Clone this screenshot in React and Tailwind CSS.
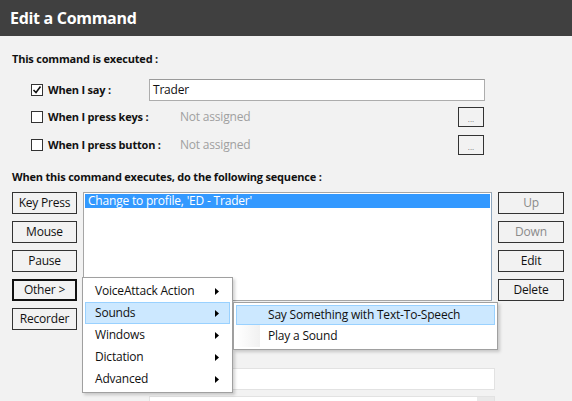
import { useState } from 'react';

const ui = { fontFamily: '"Open Sans", "Noto Sans", sans-serif' };

function Arrow() {
  return (
    <svg width="4" height="7" viewBox="0 0 4 7" className="shrink-0">
      <polygon points="0,0 4,3.5 0,7" fill="#000" />
    </svg>
  );
}

function CheckBox({ checked }) {
  return (
    <span className="flex h-[12px] w-[12px] shrink-0 items-center justify-center border border-[#333] bg-white">
      {checked && (
        <svg width="10" height="10" viewBox="0 0 10 10">
          <polyline points="1.5,5 4,7.5 8.5,1.5" fill="none" stroke="#111" strokeWidth="1.6" />
        </svg>
      )}
    </span>
  );
}

function SideButton({ children, disabled, isDefault }) {
  return (
    <button
      className={`h-[22px] w-full bg-[#f2f2f2] text-[12px] leading-none tracking-[-0.2px] ${
        isDefault ? 'border-2 border-[#111]' : 'border border-[#333]'
      } ${disabled ? 'text-[#8a8a8a]' : 'text-[#111]'}`}
    >
      {children}
    </button>
  );
}

function TriggerRow({ label, button }) {
  return (
    <div className="flex h-[20px] items-center pl-[19px]">
      <CheckBox />
      <span className="ml-[5px] w-[132px] whitespace-nowrap text-[11px] font-bold tracking-[-0.2px] text-[#111]">
        {label}
      </span>
      <span className="whitespace-nowrap text-[12px] tracking-[-0.2px] text-[#a0a0a0]">Not assigned</span>
      {button && (
        <button className="ml-auto mr-[76px] flex h-[20px] w-[26px] items-end justify-center border border-[#333] bg-[#f2f2f2] pb-[3px] text-[8px] leading-none text-[#777]">
          ...
        </button>
      )}
    </div>
  );
}

export default function App() {
  const [selected] = useState(0);
  const actions = [
    { label: 'VoiceAttack Action' },
    { label: 'Sounds', open: true },
    { label: 'Windows' },
    { label: 'Dictation' },
    { label: 'Advanced' },
  ];

  return (
    <div className="relative h-[401px] w-[572px] overflow-hidden bg-[#f2f2f2]" style={ui}>
      <div className="flex h-[36px] items-center bg-[#404040] px-[10px]">
        <span className="text-[16px] font-bold tracking-[-0.3px] text-white">Edit a Command</span>
      </div>

      <div className="px-[12px]">
        <div className="mt-[14px] h-[18px] whitespace-nowrap text-[11px] font-bold leading-[18px] tracking-[-0.2px] text-[#111]">
          This command is executed :
        </div>

        <div className="mt-[11px] flex h-[22px] items-center pl-[19px]">
          <CheckBox checked />
          <span className="ml-[5px] w-[101px] text-[11px] font-bold tracking-[-0.2px] text-[#111]">When I say :</span>
          <div className="flex h-[22px] w-[336px] items-center border border-[#adadad] border-t-[#9a9a9a] bg-white px-[3px] text-[12px] tracking-[-0.2px] text-[#111]">
            Trader
          </div>
        </div>

        <div className="mt-[6px]">
          <TriggerRow label="When I press keys :" button />
        </div>
        <div className="mt-[8px]">
          <TriggerRow label="When I press button :" button />
        </div>

        <div className="mt-[13px] h-[18px] whitespace-nowrap text-[11px] font-bold leading-[18px] tracking-[-0.2px] text-[#111]">
          When this command executes, do the following sequence :
        </div>

        <div className="mt-[6px] flex items-start gap-[6px]">
          <div className="flex w-[65px] shrink-0 flex-col gap-[7px]">
            <SideButton>Key Press</SideButton>
            <SideButton>Mouse</SideButton>
            <SideButton>Pause</SideButton>
            <SideButton isDefault>Other &gt;</SideButton>
            <SideButton>Recorder</SideButton>
          </div>

          <div className="h-[109px] w-[409px] shrink-0 border border-[#a6a6a6] border-r-[#8fa6bd] bg-white p-px">
            {["Change to profile, 'ED - Trader'"].map((row, i) => (
              <div
                key={row}
                className={`h-[14px] px-[3px] text-[12px] leading-[14px] tracking-[-0.2px] ${
                  i === selected ? 'bg-[#3399ff] text-white' : 'text-[#111]'
                }`}
              >
                {row}
              </div>
            ))}
          </div>

          <div className="flex w-[66px] shrink-0 flex-col gap-[7px]">
            <SideButton disabled>Up</SideButton>
            <SideButton disabled>Down</SideButton>
            <SideButton>Edit</SideButton>
            <SideButton>Delete</SideButton>
          </div>
        </div>

        <div className="ml-[137px] mt-[38px] h-[22px] w-[346px] border border-[#e2e2e2] bg-white" />
        <div className="ml-[137px] mt-[6px] flex h-[22px] w-[346px] border border-[#e2e2e2] bg-white">
          <div className="ml-auto w-[17px] bg-[#e9e9e9]" />
        </div>
      </div>

      {/* "Other >" action menu */}
      <div className="absolute left-[82px] top-[277px] w-[151px] border border-[#a0a0a0] bg-white p-[2px] shadow-[2px_2px_3px_rgba(0,0,0,0.18)]">
        {actions.map((a) => (
          <div
            key={a.label}
            className={`flex h-[22px] items-center pl-[9px] pr-[10px] text-[12px] tracking-[-0.2px] text-[#111] ${
              a.open ? 'border border-[#99d1ff] bg-[#cce8ff]' : 'border border-transparent'
            }`}
          >
            <span className="flex-1">{a.label}</span>
            <Arrow />
          </div>
        ))}
      </div>

      {/* Sounds submenu */}
      <div className="absolute left-[233px] top-[302px] w-[265px] border border-[#a0a0a0] bg-white p-[2px] shadow-[2px_2px_3px_rgba(0,0,0,0.18)]">
        <div className="flex h-[20px] items-center border border-[#99d1ff] bg-[#cce8ff] pl-[31px] text-[12px] tracking-[-0.2px] text-[#111]">
          Say Something with Text-To-Speech
        </div>
        <div className="flex h-[22px] items-center text-[12px] tracking-[-0.2px] text-[#111]">
          <span className="h-full w-[24px] bg-gradient-to-r from-white to-[#f1f1f1]" />
          <span className="ml-[8px]">Play a Sound</span>
        </div>
      </div>
    </div>
  );
}
